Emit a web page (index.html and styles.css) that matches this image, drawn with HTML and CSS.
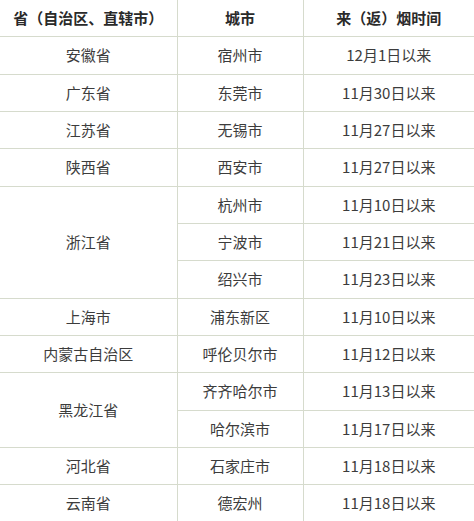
FILE: index.html
```html
<!DOCTYPE html>
<html lang="zh-CN">
<head>
<meta charset="utf-8">
<link rel="stylesheet" href="styles.css">
</head>
<body>
<table class="tbl">
  <colgroup>
    <col class="c1"><col class="c2"><col class="c3">
  </colgroup>
  <thead>
    <tr><th>省（自治区、直辖市）</th><th>城市</th><th>来（返）烟时间</th></tr>
  </thead>
  <tbody>
    <tr><td>安徽省</td><td>宿州市</td><td>12月1日以来</td></tr>
    <tr><td>广东省</td><td>东莞市</td><td>11月30日以来</td></tr>
    <tr><td>江苏省</td><td>无锡市</td><td>11月27日以来</td></tr>
    <tr><td>陕西省</td><td>西安市</td><td>11月27日以来</td></tr>
    <tr><td rowspan="3">浙江省</td><td>杭州市</td><td>11月10日以来</td></tr>
    <tr><td>宁波市</td><td>11月21日以来</td></tr>
    <tr><td>绍兴市</td><td>11月23日以来</td></tr>
    <tr><td>上海市</td><td>浦东新区</td><td>11月10日以来</td></tr>
    <tr><td>内蒙古自治区</td><td>呼伦贝尔市</td><td>11月12日以来</td></tr>
    <tr><td rowspan="2">黑龙江省</td><td>齐齐哈尔市</td><td>11月13日以来</td></tr>
    <tr><td>哈尔滨市</td><td>11月17日以来</td></tr>
    <tr><td>河北省</td><td>石家庄市</td><td>11月18日以来</td></tr>
    <tr><td>云南省</td><td>德宏州</td><td>11月18日以来</td></tr>
  </tbody>
</table>
</body>
</html>
```

FILE: styles.css
```css
html, body {
  margin: 0;
  padding: 0;
  background: #ffffff;
}
body {
  width: 474px;
  height: 521px;
  overflow: hidden;
  font-family: "Noto Sans CJK SC", "Noto Sans", sans-serif;
}
.tbl {
  width: 474px;
  border-collapse: collapse;
  table-layout: fixed;
  border-style: hidden;
}
.c1 { width: 177px; }
.c2 { width: 126px; }
.c3 { width: 171px; }
.tbl th,
.tbl td {
  border: 1px solid #d6dbcd;
  height: 36.33px;
  padding: 0;
  text-align: center;
  vertical-align: middle;
  font-size: 15px;
  line-height: 20px;
}
.tbl th {
  font-weight: bold;
  color: #2a2a2a;
}
.tbl td {
  color: #3c3c3c;
}
```
